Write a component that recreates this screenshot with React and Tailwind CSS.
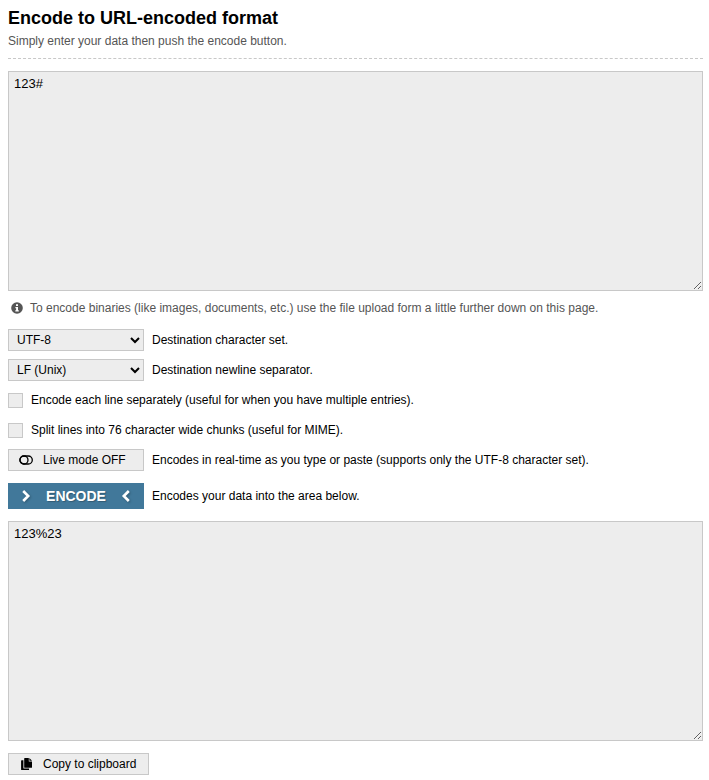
import { useState } from 'react'

const CHARSETS = ['UTF-8', 'ASCII', 'ISO-8859-1', 'ISO-8859-2', 'UTF-16', 'Windows-1252']

const NEWLINES = [
  { id: 'lf',   label: 'LF (Unix)',      value: '\n' },
  { id: 'crlf', label: 'CRLF (Windows)', value: '\r\n' },
]

const encode = (text, { newline, perLine, split }) => {
  const lines = text.split(/\r?\n/)
  let out = perLine
    ? lines.map(encodeURIComponent).join(newline)
    : encodeURIComponent(lines.join(newline))
  if (split) out = out.replace(/(.{76})(?=.)/g, `$1${newline}`)
  return out
}

// ── Icons ────────────────────────────────────────────────────────────────────
function InfoIcon() {
  return (
    <svg className="w-3 h-3 flex-shrink-0" viewBox="0 0 12 12" aria-hidden="true">
      <circle cx="6" cy="6" r="5.8" fill="#555" />
      <path d="M5 2.2h2v1.7H5zM4.4 5H7v3.2h.8v1.3H4.3V8.2h.8V6.2h-.7z" fill="#fff" />
    </svg>
  )
}

function ToggleOffIcon() {
  return (
    <svg className="w-3.5 h-3 flex-shrink-0" viewBox="0 0 14 12" fill="none" stroke="#000" strokeWidth="1.3" aria-hidden="true">
      <rect x="0.9" y="2" width="12.4" height="8" rx="4" />
      <circle cx="5" cy="6" r="4" />
    </svg>
  )
}

function ChevronIcon({ left }) {
  return (
    <svg
      className="w-3 h-3.5 flex-shrink-0 drop-shadow-[1px_1px_1px_#00000040]"
      viewBox="0 0 12 14"
      fill="none"
      stroke="#fff"
      strokeWidth="2.6"
      aria-hidden="true"
    >
      <path d={left ? 'M8.8 2L3.8 7l5 5' : 'M3.2 2L8.2 7l-5 5'} />
    </svg>
  )
}

function CopyIcon() {
  return (
    <svg className="w-3 h-3 flex-shrink-0" viewBox="0 0 12 12" fill="#000" aria-hidden="true">
      <path d="M3.8 0H7.8v3.4H11V9.2a.6.6 0 0 1-.6.6H3.8a.6.6 0 0 1-.6-.6V.6A.6.6 0 0 1 3.8 0z" />
      <path d="M8.4 0L11 2.7H8.4z" />
      <path d="M.7 2.2h1.7v7.7a.7.7 0 0 0 .7.7h5v.8a.6.6 0 0 1-.6.6H.7a.6.6 0 0 1-.6-.6V2.8a.6.6 0 0 1 .6-.6z" />
    </svg>
  )
}

// ── Form parts ───────────────────────────────────────────────────────────────
function DataArea(props) {
  return (
    <textarea
      className="block w-full h-[220px] px-[5px] py-1 resize bg-[#ededed] border border-[#c8c8c8] text-[13px] leading-4 text-black outline-none"
      spellCheck={false}
      {...props}
    />
  )
}

function SelectRow({ id, label, children, ...rest }) {
  return (
    <div className="flex items-center gap-2">
      <select
        id={id}
        className="w-[136px] h-[22px] px-1 bg-[#ededed] border border-[#c8c8c8] text-black"
        {...rest}
      >
        {children}
      </select>
      <label htmlFor={id}>{label}</label>
    </div>
  )
}

function CheckRow({ label, checked, onChange }) {
  return (
    <label className="flex items-center gap-2 h-[22px]">
      <input
        type="checkbox"
        checked={checked}
        onChange={(e) => onChange(e.target.checked)}
        className="appearance-none w-[15px] h-[15px] flex-shrink-0 bg-[#ededed] border border-[#c8c8c8] checked:bg-[#41789a]"
      />
      {label}
    </label>
  )
}

export default function App() {
  const [input,   setInput]   = useState('123#')
  const [output,  setOutput]  = useState('123%23')
  const [charset, setCharset] = useState('UTF-8')
  const [newline, setNewline] = useState('lf')
  const [perLine, setPerLine] = useState(false)
  const [split,   setSplit]   = useState(false)
  const [live,    setLive]    = useState(false)

  const run = (text) => {
    const sep = NEWLINES.find(n => n.id === newline).value
    setOutput(encode(text, { newline: sep, perLine, split }))
  }

  const handleInput = (e) => {
    setInput(e.target.value)
    if (live) run(e.target.value)
  }

  return (
    <main className="pt-2 pb-1 pl-2 pr-1.5 bg-white text-black text-xs font-['Liberation_Sans',Arial,sans-serif]">
      <header className="pb-2 mb-3 border-b border-dashed border-[#c8c8c8]">
        <h1 className="text-lg leading-5 font-bold">Encode to URL-encoded format</h1>
        <p className="mt-1 leading-[18px] text-[#555]">Simply enter your data then push the encode button.</p>
      </header>

      <DataArea aria-label="Data to encode" value={input} onChange={handleInput} />

      <p className="flex items-center gap-[7px] mt-2 mb-3 pl-[3px] leading-[18px] text-[#555]">
        <InfoIcon />
        To encode binaries (like images, documents, etc.) use the file upload form a little further down on this page.
      </p>

      <div className="flex flex-col gap-2">
        <SelectRow
          id="charset"
          label="Destination character set."
          value={charset}
          onChange={(e) => setCharset(e.target.value)}
        >
          {CHARSETS.map(c => <option key={c}>{c}</option>)}
        </SelectRow>
        <SelectRow
          id="newline"
          label="Destination newline separator."
          value={newline}
          onChange={(e) => setNewline(e.target.value)}
        >
          {NEWLINES.map(n => <option key={n.id} value={n.id}>{n.label}</option>)}
        </SelectRow>

        <CheckRow
          label="Encode each line separately (useful for when you have multiple entries)."
          checked={perLine}
          onChange={setPerLine}
        />
        <CheckRow
          label="Split lines into 76 character wide chunks (useful for MIME)."
          checked={split}
          onChange={setSplit}
        />

        <div className="flex items-center gap-2">
          <button
            type="button"
            aria-pressed={live}
            onClick={() => setLive(!live)}
            className="flex items-center gap-2.5 w-[136px] h-[22px] pl-2.5 flex-shrink-0 bg-[#ededed] border border-[#c8c8c8]"
          >
            <ToggleOffIcon />
            {live ? 'Live mode ON' : 'Live mode OFF'}
          </button>
          <span>Encodes in real-time as you type or paste (supports only the UTF-8 character set).</span>
        </div>
      </div>

      <div className="flex items-center gap-2 my-3">
        <button
          type="button"
          onClick={() => run(input)}
          className="flex items-center justify-between w-[136px] h-[26px] px-3 flex-shrink-0 bg-[#41789a] text-white text-sm font-bold [text-shadow:1px_1px_1px_#00000040]"
        >
          <ChevronIcon />
          ENCODE
          <ChevronIcon left />
        </button>
        <span>Encodes your data into the area below.</span>
      </div>

      <DataArea aria-label="Encoded result" value={output} readOnly />

      <button
        type="button"
        onClick={() => navigator.clipboard?.writeText(output)}
        className="flex items-center gap-2.5 h-[22px] mt-3 px-3 bg-[#ededed] border border-[#c8c8c8]"
      >
        <CopyIcon />
        Copy to clipboard
      </button>
    </main>
  )
}
